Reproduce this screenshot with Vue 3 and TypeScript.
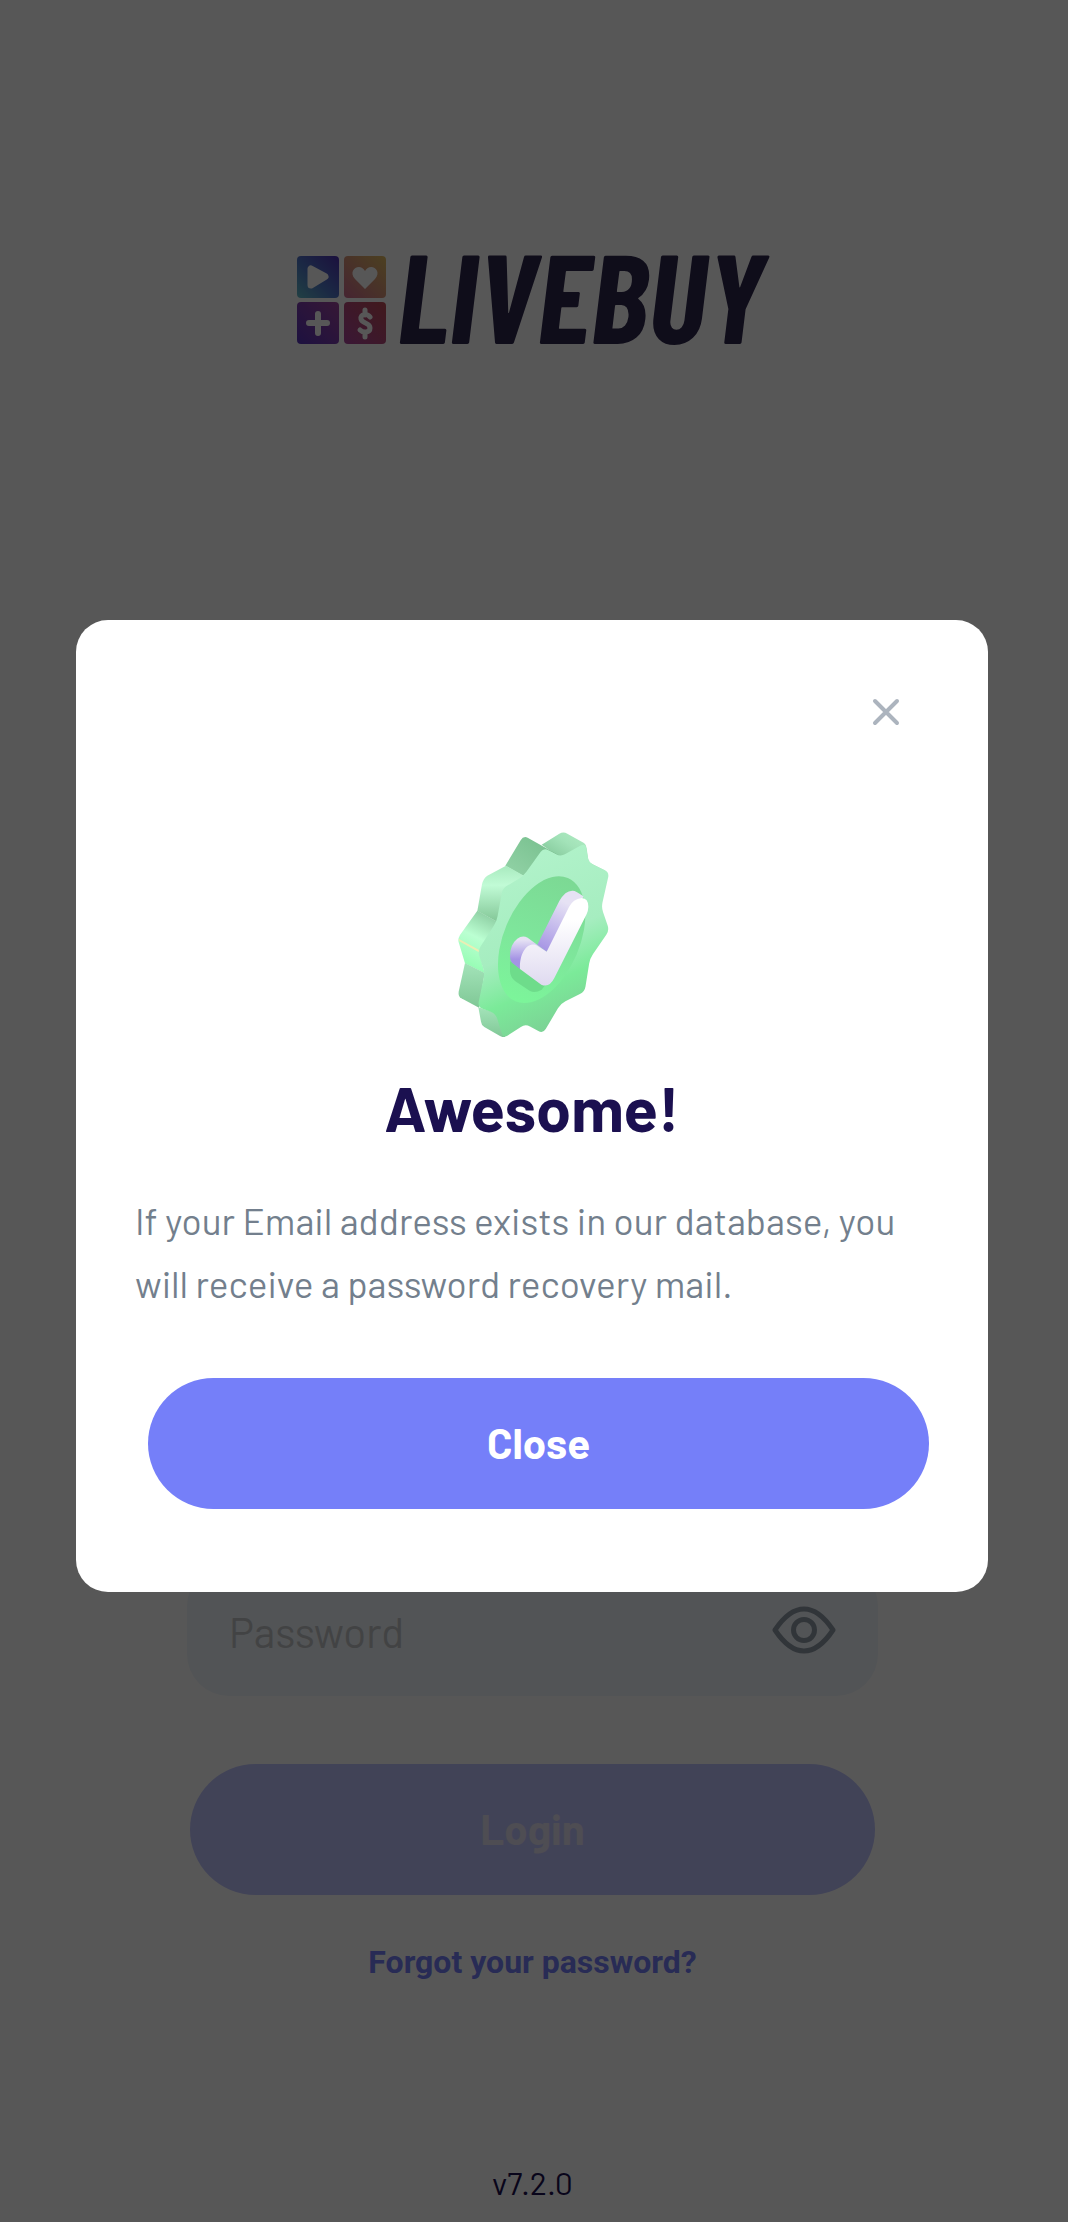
<script setup lang="ts">
import { ref } from 'vue'

type Point = [number, number]

const password = ref('')
const passwordVisible = ref(false)
const dialogOpen = ref(true)

// Closed polygon whose corners are softened by the given radius.
function rounded(points: Point[], radius: number): string {
  const toward = (from: Point, to: Point): string => {
    const length = Math.hypot(to[0] - from[0], to[1] - from[1])
    const t = Math.min(radius / length, 0.5)
    return `${(from[0] + (to[0] - from[0]) * t).toFixed(1)} ${(from[1] + (to[1] - from[1]) * t).toFixed(1)}`
  }
  return points
    .map((p, i) => {
      const prev = points[(i + points.length - 1) % points.length]
      const next = points[(i + 1) % points.length]
      return `${i ? 'L' : 'M'}${toward(p, prev)}Q${p[0]} ${p[1]} ${toward(p, next)}`
    })
    .join('') + 'Z'
}

const sealFace = rounded([
  [311, 114], [362, 141], [436, 100], [446, 158], [508, 188], [484, 293], [508, 362],
  [450, 446], [434, 546], [362, 582], [309, 672], [256, 643], [190, 686], [167, 612],
  [113, 592], [134, 490], [113, 424], [170, 335], [188, 236], [250, 199],
], 16)
</script>

<template>
  <main class="screen">
    <h1 class="brand">
      <svg class="brand-mark" viewBox="0 0 89 88" aria-hidden="true">
        <defs>
          <linearGradient id="tile-play" x1="0" y1="1" x2="1" y2="0">
            <stop offset="0" stop-color="#62bcc8" />
            <stop offset=".45" stop-color="#5078c8" />
            <stop offset="1" stop-color="#5030b4" />
          </linearGradient>
          <linearGradient id="tile-heart" x1="0" y1="1" x2="1" y2="0">
            <stop offset="0" stop-color="#cc6a90" />
            <stop offset="1" stop-color="#e0bc60" />
          </linearGradient>
          <linearGradient id="tile-plus" x1="0" y1="1" x2="1" y2="0">
            <stop offset="0" stop-color="#5634bc" />
            <stop offset="1" stop-color="#a0449c" />
          </linearGradient>
          <linearGradient id="tile-dollar" x1="0" y1="1" x2="1" y2="0">
            <stop offset="0" stop-color="#a8449c" />
            <stop offset="1" stop-color="#c04c54" />
          </linearGradient>
        </defs>
        <rect width="42" height="42" rx="4" fill="url(#tile-play)" />
        <rect x="47" width="42" height="42" rx="4" fill="url(#tile-heart)" />
        <rect y="46" width="42" height="42" rx="4" fill="url(#tile-plus)" />
        <rect x="47" y="46" width="42" height="42" rx="4" fill="url(#tile-dollar)" />
        <path d="M14 13v16l14-8.500z" fill="#fff" stroke="#fff" stroke-width="7" stroke-linejoin="round" />
        <path d="M68 33L58 23C50 14 63 6 68 15C73 6 86 14 78 23Z" fill="#fff" />
        <path d="M21 58v19M12 67h18" fill="none" stroke="#fff" stroke-width="6" stroke-linecap="round" />
        <path d="M73 61C70 57 63 58 64 63C65 68 73 66 73 72C73 77 66 77 63 74M68 54v5M68 76v5" fill="none" stroke="#fff" stroke-width="5" stroke-linecap="round" stroke-linejoin="round" />
      </svg>
      <span class="wordmark">LIVEBUY</span>
    </h1>

    <form class="login" @submit.prevent>
      <div class="field">
        <input
          v-model="password"
          class="field-input"
          :type="passwordVisible ? 'text' : 'password'"
          placeholder="Password"
          aria-label="Password"
        />
        <button class="reveal" type="button" aria-label="Show password" @click="passwordVisible = !passwordVisible">
          <svg viewBox="0 0 64 48" aria-hidden="true">
            <g fill="none" stroke="#909ca8" stroke-width="5" stroke-linejoin="round">
              <path d="M3 24C11 12 20 3 32 3s21 9 29 21C53 36 44 45 32 45S11 36 3 24z" />
              <circle cx="32" cy="24" r="10.500" />
            </g>
          </svg>
        </button>
      </div>
      <button class="pill pill-muted" type="submit">Login</button>
      <a class="forgot" href="#forgot">Forgot your password?</a>
    </form>

    <footer class="version">v7.2.0</footer>
  </main>

  <div v-if="dialogOpen" class="overlay">
    <section class="dialog" role="dialog" aria-modal="true" aria-labelledby="dialog-title">
      <button class="dismiss" type="button" aria-label="Dismiss" @click="dialogOpen = false">
        <svg viewBox="0 0 28 28" aria-hidden="true">
          <path d="M3 3l22 22M25 3L3 25" fill="none" stroke="#acb4be" stroke-width="4" stroke-linecap="round" />
        </svg>
      </button>

      <svg class="seal" viewBox="54 67 453 615" aria-hidden="true">
        <defs>
          <linearGradient id="face" x1=".35" y1="0" x2=".65" y2="1">
            <stop offset="0" stop-color="#b2f3cb" />
            <stop offset=".5" stop-color="#a6edc0" />
            <stop offset=".72" stop-color="#7bea99" />
            <stop offset="1" stop-color="#7ccb94" />
          </linearGradient>
          <linearGradient id="dish" x1="0" y1="0" x2="0" y2="1">
            <stop offset="0" stop-color="#7cd994" />
            <stop offset=".5" stop-color="#7ee59b" />
            <stop offset="1" stop-color="#7cf59a" />
          </linearGradient>
          <linearGradient id="side-top" x1="0" y1="1" x2="1" y2="0">
            <stop offset="0" stop-color="#78bf8f" />
            <stop offset=".6" stop-color="#a2e2b8" />
            <stop offset="1" stop-color="#b2edc5" />
          </linearGradient>
          <linearGradient id="side-dark" x1="1" y1="0" x2="0" y2="1">
            <stop offset="0" stop-color="#74bd8b" />
            <stop offset="1" stop-color="#93d3a7" />
          </linearGradient>
          <linearGradient id="side-light" x1="0" y1="0" x2="0" y2="1">
            <stop offset="0" stop-color="#a9eabf" />
            <stop offset=".35" stop-color="#c1fbd6" />
            <stop offset="1" stop-color="#83c797" />
          </linearGradient>
          <linearGradient id="side-glow" x1=".7" y1="0" x2=".4" y2="1">
            <stop offset="0" stop-color="#8bcba0" />
            <stop offset=".45" stop-color="#bbffd2" />
            <stop offset="1" stop-color="#91fcb0" />
          </linearGradient>
          <linearGradient id="side-low" x1="0" y1="0" x2="0" y2="1">
            <stop offset="0" stop-color="#a3e3b9" />
            <stop offset="1" stop-color="#80c896" />
          </linearGradient>
          <linearGradient id="tick-face" x1="0" y1="0" x2="0" y2="1">
            <stop offset="0" stop-color="#fff" />
            <stop offset=".25" stop-color="#fff" />
            <stop offset="1" stop-color="#dfdaf0" />
          </linearGradient>
          <linearGradient id="tick-side" gradientUnits="userSpaceOnUse" x1="395" y1="243" x2="310" y2="425">
            <stop offset=".2" stop-color="#e6e2f4" />
            <stop offset="1" stop-color="#a493e4" />
          </linearGradient>
          <linearGradient id="tick-heel" x1="0" y1="0" x2="0" y2="1">
            <stop offset=".1" stop-color="#e6e2f4" />
            <stop offset=".7" stop-color="#a493e4" />
          </linearGradient>
        </defs>
        <path d="M305 105L358 72Q370 65 382 72L432 100Q440 106 440 116L446 160L362 145z" fill="url(#side-top)" />
        <path d="M445 157L490 180Q502 186 504 200L470 195z" fill="#a6dfb8" />
        <path d="M196 168L242 92Q250 78 263 84L362 140L320 122L250 199z" fill="url(#side-dark)" />
        <path d="M112 304L126 224Q130 206 142 198L198 168L253 199L195 240L171 336z" fill="url(#side-light)" />
        <path d="M75 461L56 398Q53 388 60 376L112 303L172 336L117 425L134 491z" fill="url(#side-glow)" />
        <path d="M56 387L116 420L117 428L58 395z" fill="#ebeeb4" />
        <path d="M75 460L134 490L117 594L64 566Q54 560 56 546z" fill="url(#side-low)" />
        <path d="M115 593L170 610L196 682Q188 684 180 679L133 652Q124 646 123 636z" fill="url(#side-low)" />
        <path :d="sealFace" fill="url(#face)" />
        <ellipse cx="305" cy="390" rx="114" ry="201" transform="rotate(23 305 390)" fill="url(#dish)" />
        <path d="M210 455V485Q211 503 225 514L270 544Q285 552 305 540L320 520z" fill="#6edc8b" />
        <path d="M292 405L358 274Q376 242 398 243Q408 243 430 260L420 290L320 426z" fill="url(#tick-side)" />
        <path d="M240 478L217 460Q210 454 210 440Q210 404 232 387Q247 376 263 384L320 426z" fill="url(#tick-heel)" />
        <path d="M240 478C238 432 260 398 288 406L320 426L387 292Q399 268 425 265Q445 266 445 291Q445 303 439 315L343 505Q328 535 304 525z" fill="url(#tick-face)" />
      </svg>

      <h2 id="dialog-title" class="title">Awesome!</h2>
      <p class="message">If your Email address exists in our database, you will receive a password recovery mail.</p>
      <button class="pill pill-primary" type="button" @click="dialogOpen = false">Close</button>
    </section>
  </div>
</template>

<style>
body {
  margin: 0;
  background: #fff;
}
</style>

<style scoped>
.screen,
.overlay {
  box-sizing: border-box;
  min-height: 100vh;
  font-family: Barlow, Roboto, "Liberation Sans", sans-serif;
}

.screen {
  display: flex;
  flex-direction: column;
  align-items: center;
  padding: 256px 193px 22px 190px;
}

button,
input {
  font-family: inherit;
}

button {
  padding: 0;
  border: 0;
  cursor: pointer;
}

.brand {
  display: flex;
  align-items: center;
  gap: 11px;
  height: 88px;
  margin: 0 4px 0 0;
}

.brand-mark {
  width: 89px;
  height: 88px;
}

.wordmark {
  padding-bottom: 12px;
  color: #2e274d;
  font-family: "Barlow Condensed", "Roboto Condensed", "Liberation Sans Narrow", Roboto, sans-serif;
  font-size: 126px;
  font-style: italic;
  font-weight: 700;
  line-height: 88px;
}

.login {
  display: flex;
  flex-direction: column;
  align-items: center;
  width: 100%;
  margin-top: 1220px;
}

.field {
  box-sizing: border-box;
  display: flex;
  align-items: center;
  align-self: stretch;
  height: 132px;
  margin: 0 -3px 68px;
  padding: 0 42px;
  border-radius: 42px;
  background: #f1f6fb;
}

.field-input {
  flex: 1;
  min-width: 0;
  padding: 2px 0 0;
  border: 0;
  outline: 0;
  background: transparent;
  color: #1b1050;
  font-size: 42px;
  font-weight: 400;
}

.field-input::placeholder {
  color: #c2c4c6;
  opacity: 1;
}

.reveal {
  width: 64px;
  height: 48px;
  background: transparent;
}

.reveal svg,
.dismiss svg {
  display: block;
  width: 100%;
  height: 100%;
}

.pill {
  height: 131px;
  padding-bottom: 3px;
  border-radius: 66px;
  color: #fff;
  font-size: 42px;
  font-weight: 700;
}

.pill-muted {
  width: 100%;
  background: #bfc4ff;
  color: #e4e0f2;
}

.pill-primary {
  align-self: stretch;
  margin-left: 13px;
  background: #757ff9;
}

.forgot {
  margin-top: 47px;
  color: #757ff9;
  font-family: Roboto, sans-serif;
  font-size: 32px;
  font-weight: 700;
  line-height: 40px;
  text-decoration: none;
}

.version {
  margin-top: auto;
  color: #1b1050;
  font-size: 32px;
  line-height: 36px;
}

.overlay {
  position: fixed;
  inset: 0;
  display: flex;
  align-items: center;
  justify-content: center;
  padding: 0 80px 10px 76px;
  background: rgba(0, 0, 0, 0.66);
}

.dialog {
  box-sizing: border-box;
  display: flex;
  flex-direction: column;
  align-items: center;
  width: 100%;
  padding: 78px 59px 83px;
  border-radius: 32px;
  background: #fff;
}

.dismiss {
  align-self: flex-end;
  width: 28px;
  height: 28px;
  margin-right: 29px;
  background: transparent;
}

.seal {
  width: 151px;
  height: 205px;
  margin: 106px 0 0 2px;
}

.title {
  margin: 34px 0 0;
  color: #1b1050;
  font-size: 63px;
  font-weight: 700;
  line-height: 72px;
}

.message {
  align-self: stretch;
  margin: 46px 0 63px;
  color: #737f8d;
  font-size: 37px;
  font-weight: 400;
  line-height: 63px;
}
</style>
